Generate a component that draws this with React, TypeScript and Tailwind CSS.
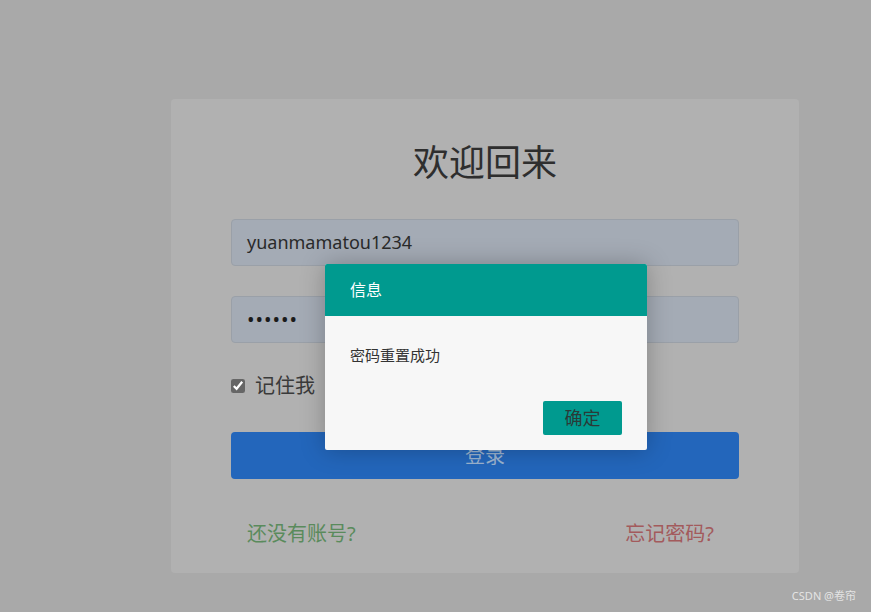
import { useState } from "react";

const font = { fontFamily: '"Noto Sans", "Noto Sans CJK SC", sans-serif' };

export default function App() {
  const [remember, setRemember] = useState(true);

  return (
    <div className="relative w-[871px] h-[612px] overflow-hidden bg-[#a9a9a9]" style={font}>
      <div className="ml-[171px] mt-[99px] w-[628px] h-[474px] rounded-[4px] bg-[#b1b1b1] px-[60px] pt-[40px]">
        <h1 className="text-center text-[36px] leading-[48px] text-[#2e2e2e]">欢迎回来</h1>
        <div className="mt-[32px] flex flex-col gap-[30px]">
          <div className="h-[47px] rounded-[4px] border border-[#9aa0a8] bg-[#a4abb5] px-[15px] flex items-center text-[18px] text-[#2a2a2a]">
            yuanmamatou1234
          </div>
          <div className="h-[47px] rounded-[4px] border border-[#9aa0a8] bg-[#a4abb5] px-[15px] flex items-center text-[20px] tracking-[1px] text-[#1a1a1a]">
            ••••••
          </div>
        </div>
        <label className="mt-[28px] flex items-center gap-[10px] text-[20px] text-[#3a3a3a]">
          <input type="checkbox" checked={remember} onChange={() => setRemember(!remember)} className="w-[14px] h-[14px] accent-[#666]" />
          记住我
        </label>
        <button className="mt-[31px] w-full h-[47px] rounded-[4px] bg-[#2366bb] text-[20px] text-[#9bb3cf]">登录</button>
        <div className="mt-[40px] flex justify-between px-[16px] text-[20px]">
          <span className="text-[#5a8b5c]">还没有账号?</span>
          <span className="text-[#a35a5c] mr-[9px]">忘记密码?</span>
        </div>
      </div>

      <div className="absolute left-[325px] top-[264px] w-[322px] h-[186px] rounded-[2px] bg-[#f7f7f7] shadow-[0_0_24px_rgba(0,0,0,0.25)] flex flex-col overflow-hidden">
        <div className="h-[52px] bg-[#009a8f] px-[25px] flex items-center text-[16px] text-white">信息</div>
        <div className="px-[25px] pt-[28px] text-[15px] text-[#333]">密码重置成功</div>
        <div className="mt-auto mb-[15px] mr-[25px] flex justify-end">
          <button className="w-[79px] h-[34px] rounded-[2px] bg-[#009a8f] text-[18px] text-[#2a3a38]">确定</button>
        </div>
      </div>

      <div className="absolute right-[15px] bottom-[8px] text-[11px] text-[#e4e4e4]">CSDN @卷帘</div>
    </div>
  );
}
